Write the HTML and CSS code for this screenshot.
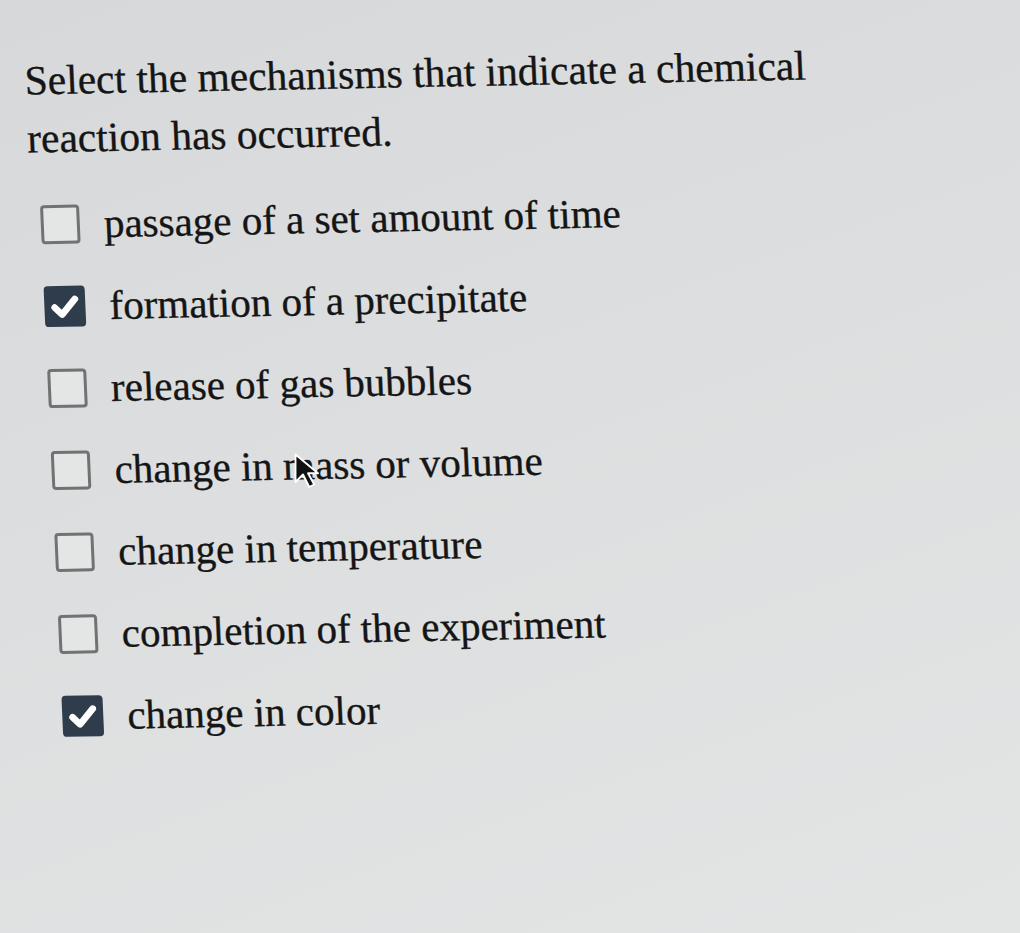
FILE: index.html
```html
<!DOCTYPE html>
<html lang="en">
<head>
    <meta charset="UTF-8">
    <meta name="viewport" content="width=device-width, initial-scale=1.0">
    <title>Chemical Reactions</title>
    <link rel="stylesheet" href="styles.css">
</head>
<body>
    <div class="question">
        <p class="prompt">Select the mechanisms that indicate a chemical reaction has occurred.</p>
        <ul class="choices">
            <li class="choice"><span class="box"></span><span class="label">passage of a set amount of time</span></li>
            <li class="choice"><span class="box checked"><svg viewBox="0 0 40 40"><path d="M10 21 L17 28 L30 13"/></svg></span><span class="label">formation of a precipitate</span></li>
            <li class="choice"><span class="box"></span><span class="label">release of gas bubbles</span></li>
            <li class="choice"><span class="box"></span><span class="label">change in mass or volume</span></li>
            <li class="choice"><span class="box"></span><span class="label">change in temperature</span></li>
            <li class="choice"><span class="box"></span><span class="label">completion of the experiment</span></li>
            <li class="choice"><span class="box checked"><svg viewBox="0 0 40 40"><path d="M10 21 L17 28 L30 13"/></svg></span><span class="label">change in color</span></li>
        </ul>
    </div>

    <!-- mouse pointer -->
    <svg class="pointer" viewBox="0 0 24 32">
        <path d="M2 2 L2 24 L8 18 L13 28 L17 26 L12 17 L20 17 Z"/>
    </svg>
</body>
</html>
```

FILE: styles.css
```css
body {
    margin: 0;
    min-height: 933px;
    background: linear-gradient(160deg, #d6d8d9 0%, #dcdedf 45%, #e3e5e5 100%);
    font-family: "Liberation Serif", "Times New Roman", serif;
    color: #151515;
    -webkit-text-stroke: 0.35px #151515;
    overflow: hidden;
}

.question {
    padding: 52px 0 0 21px;
    transform-origin: 0 0;
    transform: rotate(-1.1deg) skewX(1.4deg);
}

.prompt {
    margin: 0;
    width: 830px;
    font-size: 41.5px;
    line-height: 58px;
}

.choices {
    list-style: none;
    margin: 16px 0 0 0;
    padding: 0 0 0 10px;
}

.choice {
    display: flex;
    align-items: center;
    gap: 24px;
    height: 82px;
    font-size: 41px;
}

.box {
    width: 39px;
    height: 39px;
    box-sizing: border-box;
    border: 3px solid #707273;
    border-radius: 4px;
    background: #e4e6e6;
    flex-shrink: 0;
}

.box.checked {
    border: none;
    background: #2e3c4b;
    width: 41px;
    height: 41px;
}

.box svg {
    display: block;
    width: 100%;
    height: 100%;
}

.box svg path {
    fill: none;
    stroke: #fff;
    stroke-width: 6.5;
    stroke-linecap: round;
    stroke-linejoin: round;
}

.pointer {
    position: absolute;
    left: 293px;
    top: 452px;
    width: 30px;
    height: 40px;
}

.pointer path {
    fill: #111;
    stroke: #fff;
    stroke-width: 1.5;
    stroke-linejoin: round;
}
```
